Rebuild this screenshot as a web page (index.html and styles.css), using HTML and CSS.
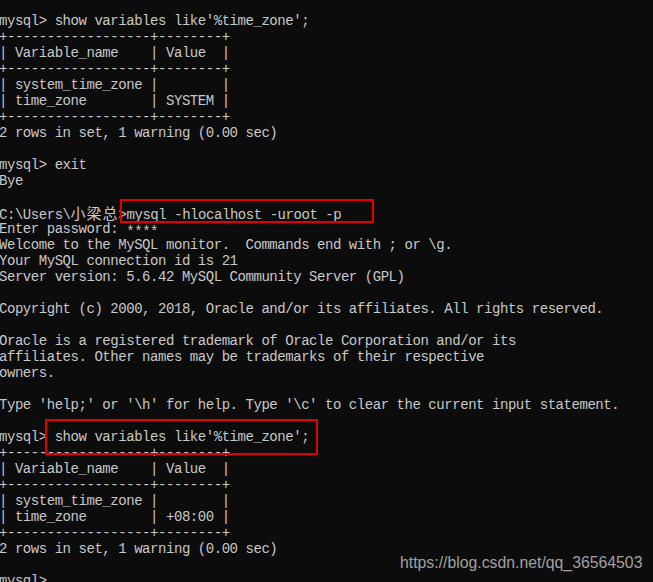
FILE: index.html
```html
<!DOCTYPE html>
<html>
<head>
<meta charset="utf-8">
<link rel="stylesheet" href="styles.css">
</head>
<body>
<div class="screen">
  <div class="console">
    <div class="ln">mysql&gt; show variables like'%time_zone';</div>
    <div class="ln"><span class="rule">+------------------+--------+</span></div>
    <div class="ln">| Variable_name    | Value  |</div>
    <div class="ln"><span class="rule">+------------------+--------+</span></div>
    <div class="ln">| system_time_zone |        |</div>
    <div class="ln">| time_zone        | SYSTEM |</div>
    <div class="ln"><span class="rule">+------------------+--------+</span></div>
    <div class="ln">2 rows in set, 1 warning (0.00 sec)</div>
    <div class="ln"></div>
    <div class="ln">mysql&gt; exit</div>
    <div class="ln">Bye</div>
    <div class="ln"></div>
    <div class="ln">C:\Users\<span class="cjk">小梁总</span>&gt;mysql -hlocalhost -uroot -p</div>
    <div class="ln">Enter password: <span class="stars">****</span></div>
    <div class="ln">Welcome to the MySQL monitor.  Commands end with ; or \g.</div>
    <div class="ln">Your MySQL connection id is 21</div>
    <div class="ln">Server version: 5.6.42 MySQL Community Server (GPL)</div>
    <div class="ln"></div>
    <div class="ln">Copyright (c) 2000, 2018, Oracle and/or its affiliates. All rights reserved.</div>
    <div class="ln"></div>
    <div class="ln">Oracle is a registered trademark of Oracle Corporation and/or its</div>
    <div class="ln">affiliates. Other names may be trademarks of their respective</div>
    <div class="ln">owners.</div>
    <div class="ln"></div>
    <div class="ln">Type 'help;' or '\h' for help. Type '\c' to clear the current input statement.</div>
    <div class="ln"></div>
    <div class="ln">mysql&gt; show variables like'%time_zone';</div>
    <div class="ln"><span class="rule">+------------------+--------+</span></div>
    <div class="ln">| Variable_name    | Value  |</div>
    <div class="ln"><span class="rule">+------------------+--------+</span></div>
    <div class="ln">| system_time_zone |        |</div>
    <div class="ln">| time_zone        | +08:00 |</div>
    <div class="ln"><span class="rule">+------------------+--------+</span></div>
    <div class="ln">2 rows in set, 1 warning (0.00 sec)</div>
    <div class="ln"></div>
    <div class="ln">mysql&gt;</div>
  </div>
  <div class="mark mark-login"></div>
  <div class="mark mark-query"></div>
  <div class="watermark">https://blog.csdn.net/qq_36564503</div>
</div>
</body>
</html>
```

FILE: styles.css
```css
html, body {
  margin: 0;
  padding: 0;
  background: #0c0c0c;
}

.screen {
  position: relative;
  width: 653px;
  height: 582px;
  overflow: hidden;
  background: #0c0c0c;
}

.console {
  padding-top: 13px;
  margin-left: -1px;
  color: #c8c8c8;
  font-family: "Liberation Mono", "DejaVu Sans Mono", monospace;
  font-size: 14px;
  letter-spacing: -0.45px;
}

.ln {
  height: 16px;
  line-height: 16px;
  white-space: pre;
}

.rule {
  vertical-align: 3px;
}

.stars {
  vertical-align: -3px;
}

.cjk {
  display: inline-block;
  width: 48px;
  font-family: "Noto Sans CJK SC", sans-serif;
  font-size: 15px;
  letter-spacing: 1px;
  line-height: 16px;
}

.mark {
  position: absolute;
  border: 2px solid #e40000;
  box-sizing: border-box;
}

.mark-login {
  left: 120px;
  top: 199px;
  width: 254px;
  height: 24px;
}

.mark-query {
  left: 45px;
  top: 419px;
  width: 273px;
  height: 36px;
}

.watermark {
  position: absolute;
  left: 400px;
  top: 555px;
  font-family: "Liberation Sans", Arial, sans-serif;
  font-size: 15.8px;
  line-height: 16px;
  color: #a0a0a0;
  white-space: nowrap;
}
```
